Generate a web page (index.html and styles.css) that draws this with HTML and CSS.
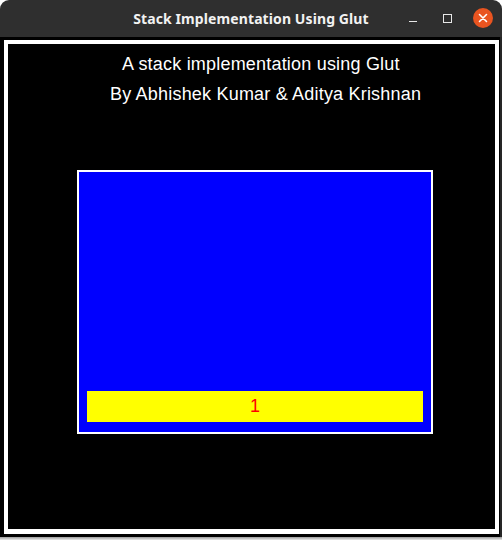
FILE: index.html
```html
<!DOCTYPE html>
<html>
<head>
<meta charset="utf-8">
<link rel="stylesheet" href="styles.css">
</head>
<body>
<div class="window">
  <div class="titlebar">
    <div class="title">Stack Implementation Using Glut</div>
    <div class="controls">
      <span class="btn-min"></span>
      <span class="btn-max"></span>
      <span class="btn-close">
        <svg width="18" height="18" viewBox="0 0 18 18"><path d="M5.5 5.5 L12.5 12.5 M12.5 5.5 L5.5 12.5" stroke="#fff" stroke-width="1.6" stroke-linecap="round"/></svg>
      </span>
    </div>
  </div>
  <div class="client">
    <div class="frame">
      <div class="line line1">A stack implementation using Glut</div>
      <div class="line line2">By Abhishek Kumar &amp; Aditya Krishnan</div>
      <div class="stack">
        <div class="item">1</div>
      </div>
    </div>
  </div>
  <div class="shadow"></div>
</div>
</body>
</html>
```
FILE: styles.css
```css
html, body {
  margin: 0;
  padding: 0;
  background: #ffffff;
}
.window {
  width: 502px;
  height: 540px;
  display: flex;
  flex-direction: column;
  overflow: hidden;
}
.titlebar {
  height: 37px;
  background: #2f2f2f;
  border-radius: 9px 9px 0 0;
  display: flex;
  align-items: center;
  justify-content: center;
  position: relative;
  flex: none;
}
.title {
  color: #f2f2f2;
  font-family: "Noto Sans", "DejaVu Sans", sans-serif;
  font-weight: bold;
  font-size: 14px;
  letter-spacing: 0.1px;
  margin-top: -1px;
}
.controls {
  position: absolute;
  right: 9px;
  top: 0;
  height: 37px;
  display: flex;
  align-items: center;
}
.btn-min {
  width: 8px;
  height: 1px;
  background: #e8e8e8;
  margin-top: 6px;
  margin-right: 26px;
}
.btn-max {
  width: 7px;
  height: 7px;
  border: 1px solid #e8e8e8;
  margin-right: 21px;
  margin-top: -1px;
}
.btn-close {
  width: 20px;
  height: 20px;
  border-radius: 50%;
  background: #e95420;
  display: flex;
  align-items: center;
  justify-content: center;
  margin-top: -1px;
}
.client {
  height: 500px;
  background: #000000;
  border-right: 2px solid #262626;
  padding: 3px 0 0 4px;
  box-sizing: border-box;
  flex: none;
}
.frame {
  width: 495px;
  height: 494px;
  box-sizing: border-box;
  border: 4px solid #ffffff;
  border-bottom-width: 5px;
  display: flex;
  flex-direction: column;
  align-items: flex-start;
}
.line {
  color: #ffffff;
  font-family: "Liberation Sans", Arial, sans-serif;
  font-size: 18px;
  line-height: 20px;
  letter-spacing: 0.2px;
}
.line1 {
  margin-top: 10px;
  margin-left: 114px;
}
.line2 {
  margin-top: 10px;
  margin-left: 102px;
}
.stack {
  margin-top: 66px;
  margin-left: 69px;
  width: 356px;
  height: 264px;
  box-sizing: border-box;
  border: 2px solid #ffffff;
  background: #0000ff;
  display: flex;
  flex-direction: column;
  justify-content: flex-end;
  padding: 0 8px 10px 8px;
}
.item {
  height: 31px;
  background: #ffff00;
  color: #ff0000;
  font-family: "Liberation Sans", Arial, sans-serif;
  font-size: 18px;
  line-height: 31px;
  text-align: center;
}
.shadow {
  flex: 1;
  background: linear-gradient(#9a9a9a, #e8e8e8);
}
```
